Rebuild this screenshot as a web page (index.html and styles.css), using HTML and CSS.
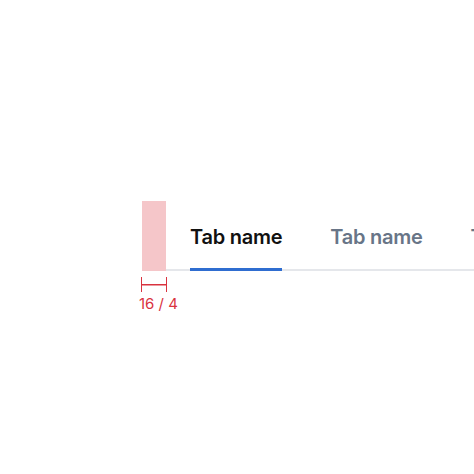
FILE: index.html
```html
<!DOCTYPE html>
<html lang="en">
<head>
  <meta charset="UTF-8">
  <meta name="viewport" content="width=device-width, initial-scale=1.0">
  <title>Tabs spec</title>
  <link rel="stylesheet" href="styles.css">
</head>
<body>
  <div class="stage">
    <div class="tabs">
      <div class="inset"></div> <!-- отступ слева -->
      <div class="tab active">Tab name</div>
      <div class="tab">Tab name</div>
      <div class="tab">Tab name</div>
    </div>
    <div class="measure">
      <div class="bracket"></div>
      <div class="label">16 / 4</div>
    </div>
  </div>
</body>
</html>
```

FILE: styles.css
```css
body {
  margin: 0;
  background-color: #fff;
  font-family: Inter, "Liberation Sans", sans-serif;
  overflow: hidden;
}
.stage {
  width: 474px;
  height: 474px;
  padding: 201px 0 0 142px;
  box-sizing: border-box;
  overflow: hidden;
}
.tabs {
  display: flex;
  gap: 24px;
  height: 70px;
  width: 600px;
  border-bottom: 2px solid #e5e7eb;
  box-sizing: border-box;
}
.inset {
  width: 24px;
  flex-shrink: 0;
  background-color: #f5c6c9; /* розовая зона отступа */
  margin-bottom: -2px;
}
.tab {
  display: flex;
  align-items: center;
  flex-shrink: 0;
  margin-right: 24px;
  font-size: 20px;
  font-weight: 600;
  letter-spacing: -0.25px;
  color: #687587;
  margin-bottom: -2px;
  border-bottom: 3px solid transparent;
  padding-top: 4px;
}
.tab.active {
  color: #111;
  border-bottom-color: #2f6dd0;
}
.measure {
  width: 26px;
  margin-left: -1px;
  padding-top: 6px;
}
.bracket {
  height: 15px;
  border-left: 1.5px solid #d9333f;
  border-right: 1.5px solid #d9333f;
  box-sizing: border-box;
  background: linear-gradient(#d9333f, #d9333f) center / 100% 1.5px no-repeat;
}
.label {
  margin-top: 2px;
  margin-left: -2px;
  width: 40px;
  font-size: 15px;
  color: #d9333f;
  white-space: nowrap;
}
```
